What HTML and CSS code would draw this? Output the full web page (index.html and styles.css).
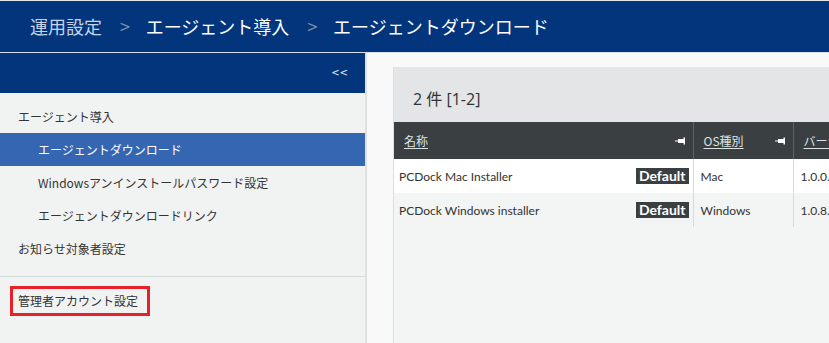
FILE: index.html
```html
<!DOCTYPE html>
<html lang="ja">
<head>
<meta charset="utf-8">
<link rel="stylesheet" href="styles.css">
</head>
<body>
<header class="topbar">
  <span class="crumb crumb-first">運用設定</span>
  <span class="sep">&gt;</span>
  <span class="crumb">エージェント導入</span>
  <span class="sep">&gt;</span>
  <span class="crumb">エージェントダウンロード</span>
</header>
<div class="layout">
  <aside class="sidebar">
    <div class="side-head"><span class="collapse">&lt;&lt;</span></div>
    <ul class="menu">
      <li class="item">エージェント導入</li>
      <li class="item sub active">エージェントダウンロード</li>
      <li class="item sub">Windowsアンインストールパスワード設定</li>
      <li class="item sub">エージェントダウンロードリンク</li>
      <li class="item">お知らせ対象者設定</li>
    </ul>
    <div class="menu2">
      <span class="boxed">管理者アカウント設定</span>
    </div>
  </aside>
  <main class="main">
    <div class="card">
      <div class="count">2 件 [1-2]</div>
      <table class="grid">
        <thead>
          <tr>
            <th class="c1"><div class="th-in"><a>名称</a><svg class="pin" width="11" height="8" viewBox="0 0 11 8"><rect x="0" y="3.5" width="4" height="1" fill="#fff"/><rect x="3" y="2" width="6" height="4" fill="#fff"/><rect x="8.5" y="0.5" width="1.5" height="7" fill="#fff"/></svg></div></th>
            <th class="c2"><div class="th-in"><a>OS種別</a><svg class="pin" width="11" height="8" viewBox="0 0 11 8"><rect x="0" y="3.5" width="4" height="1" fill="#fff"/><rect x="3" y="2" width="6" height="4" fill="#fff"/><rect x="8.5" y="0.5" width="1.5" height="7" fill="#fff"/></svg></div></th>
            <th class="c3"><div class="th-in"><a>バージョン</a></div></th>
          </tr>
        </thead>
        <tbody>
          <tr>
            <td class="c1"><div class="td-in"><span>PCDock Mac Installer</span><span class="badge">Default</span></div></td>
            <td class="c2">Mac</td>
            <td class="c3">1.0.0.0</td>
          </tr>
          <tr class="alt">
            <td class="c1"><div class="td-in"><span>PCDock Windows installer</span><span class="badge">Default</span></div></td>
            <td class="c2">Windows</td>
            <td class="c3">1.0.8.0</td>
          </tr>
        </tbody>
      </table>
    </div>
  </main>
</div>
</body>
</html>
```

FILE: styles.css
```css
* { box-sizing: border-box; }
html, body { margin: 0; padding: 0; }
body {
  width: 829px;
  height: 343px;
  overflow: hidden;
  background: #f9f9f9;
  font-family: "Noto Sans CJK JP", "Noto Sans", sans-serif;
  color: #333;
}
.topbar {
  height: 53px;
  background: #03357d;
  border-top: 1px solid #e3e6ea;
  border-bottom: 1px solid #d9dee6;
  display: flex;
  align-items: center;
  padding-left: 30px;
  font-size: 18px;
  color: #fff;
  padding-bottom: 1px;
}
.crumb { line-height: 24px; }
.crumb-first { color: #c6d3e6; }
.sep {
  color: #7d8ea8;
  font-family: "DejaVu Sans", sans-serif;
  font-size: 14px;
  margin: 0 15px 0 17px;
  transform: scaleY(1.1);
}
.layout {
  display: flex;
  height: 290px;
}
.sidebar {
  width: 367px;
  flex: none;
  background: #f1f3f3;
  border-right: 2px solid #dfe1e1;
}
.side-head {
  height: 40px;
  background: #03357d;
  display: flex;
  align-items: center;
  justify-content: flex-end;
  padding-right: 17px;
}
.collapse {
  color: #e6ebf3;
  font-size: 10px;
  font-family: "DejaVu Sans", sans-serif;
  margin-top: -1px;
}
.menu {
  list-style: none;
  margin: 0;
  padding: 7px 0 11px;
  border-bottom: 1px solid #d7dada;
}
.item {
  height: 33px;
  line-height: 33px;
  font-size: 12px;
  padding-left: 18px;
  color: #333;
}
.item.sub { padding-left: 38px; }
.item.active {
  background: #3566b2;
  color: #fff;
}
.menu2 {
  padding: 9px 0 0 10px;
}
.boxed {
  display: inline-block;
  border: 3px solid #e8202a;
  font-size: 12px;
  line-height: 22px;
  padding: 1px 9px 1px 5px;
  color: #333;
  background: #f1f3f3;
}
.main {
  flex: 1;
  padding: 14px 0 0 26px;
  min-width: 0;
}
.card {
  background: #f3f4f4;
  border-left: 1px solid #dcdede;
  height: 100%;
  overflow: hidden;
}
.count {
  height: 55px;
  background: #e4e5e6;
  font-family: "Open Sans", "Noto Sans CJK JP", sans-serif;
  font-size: 16px;
  line-height: 20px;
  padding: 22px 0 0 19px;
  color: #333;
}
.grid {
  border-collapse: collapse;
  table-layout: fixed;
  width: 480px;
}
.grid th {
  background: #3a4042;
  height: 37px;
  padding: 0;
  text-align: left;
  font-weight: normal;
  font-size: 12px;
  color: #dfe2e3;
  border-right: 1px solid #5c6365;
}
.grid th a {
  text-decoration: underline;
  text-underline-offset: 2px;
}
.th-in {
  display: flex;
  align-items: center;
  justify-content: space-between;
  padding: 0 7px 0 10px;
}
.pin { flex: none; margin-top: 1px; }
.c1 { width: 299px; }
.c2 { width: 100px; }
.c3 { width: 81px; }
.grid td {
  height: 34px;
  padding: 0 0 0 7px;
  font-family: "Lato", "Noto Sans CJK JP", sans-serif;
  font-size: 12px;
  color: #333;
  background: #fff;
  border-right: 1px solid #d8dada;
  white-space: nowrap;
  overflow: hidden;
}
.grid td.c1 { padding: 0 4px 0 5px; }
.grid tr.alt td { background: #f3f4f4; }
.td-in {
  display: flex;
  align-items: center;
  justify-content: space-between;
}
.badge {
  background: #3a4042;
  color: #fff;
  font-weight: bold;
  font-size: 14px;
  line-height: 16px;
  padding: 0 3px;
}
```
